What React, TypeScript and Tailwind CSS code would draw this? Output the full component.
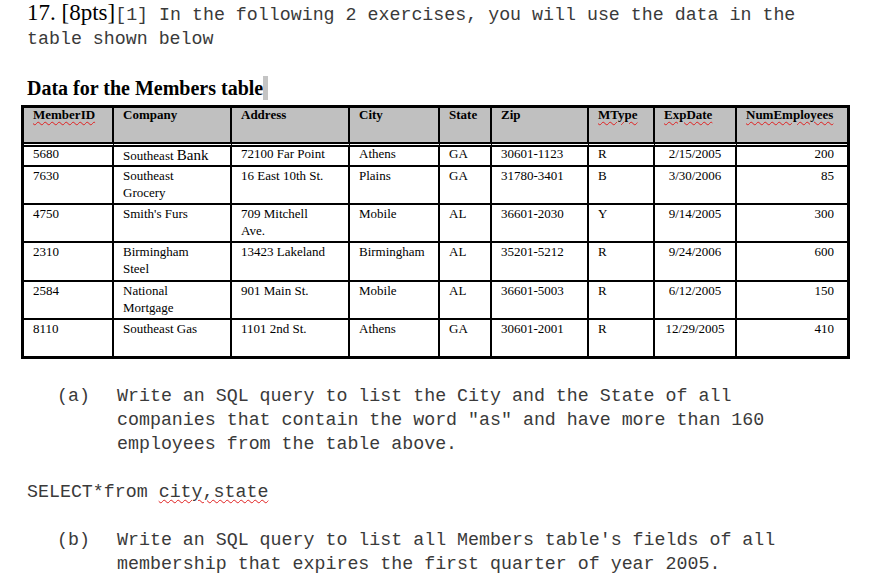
import React from "react";

type TRow = {
  id: string
  company: React.ReactNode
  address: string[]
  city: string
  state: string
  zip: string
  mtype: string
  exp: string
  num: string
  h: string
  lead: string
  companyPad?: string
}

const rows: TRow[] = [
  {
    id: '5680',
    company: <>Southeast <span className="text-[15px]">Bank</span></>,
    address: ['72100 Far Point'], city: 'Athens', state: 'GA', zip: '30601-1123', mtype: 'R', exp: '2/15/2005', num: '200',
    h: 'h-[20px]', lead: 'leading-[13px]', companyPad: 'pt-[2px]'
  },
  {
    id: '7630', company: <>Southeast<br />Grocery</>,
    address: ['16 East 10th St.'], city: 'Plains', state: 'GA', zip: '31780-3401', mtype: 'B', exp: '3/30/2006', num: '85',
    h: 'h-[38px]', lead: 'leading-[17px]'
  },
  {
    id: '4750', company: <>Smith's Furs</>,
    address: ['709 Mitchell', 'Ave.'], city: 'Mobile', state: 'AL', zip: '36601-2030', mtype: 'Y', exp: '9/14/2005', num: '300',
    h: 'h-[38px]', lead: 'leading-[17px]'
  },
  {
    id: '2310', company: <>Birmingham<br />Steel</>,
    address: ['13423 Lakeland'], city: 'Birmingham', state: 'AL', zip: '35201-5212', mtype: 'R', exp: '9/24/2006', num: '600',
    h: 'h-[39px]', lead: 'leading-[17px]'
  },
  {
    id: '2584', company: <>National<br />Mortgage</>,
    address: ['901 Main St.'], city: 'Mobile', state: 'AL', zip: '36601-5003', mtype: 'R', exp: '6/12/2005', num: '150',
    h: 'h-[38px]', lead: 'leading-[17px]'
  },
  {
    id: '8110', company: <>Southeast Gas</>,
    address: ['1101 2nd St.'], city: 'Athens', state: 'GA', zip: '30601-2001', mtype: 'R', exp: '12/29/2005', num: '410',
    h: 'h-[36px]', lead: 'leading-[17px]'
  },
]

const Squiggle: React.FC<{ children: React.ReactNode }> = ({ children }) => (
  <span className="underline decoration-wavy decoration-[#e02020] decoration-1 underline-offset-[2px]">{children}</span>
)

const App: React.FC = () => {
  const th = "bg-[#c0c0c0] bg-clip-padding border-r-2 border-b-[5px] border-black [border-bottom-style:double] align-top text-left font-bold pl-[9px] pr-0 pt-0 leading-[13px]"
  const td = "border-r-2 border-black align-top pl-[9px] pr-0 pt-0"

  return (
    <div className="w-[871px] h-[588px] overflow-hidden bg-white text-black pt-[1px]">
      <div className="pl-[27px] leading-[24px] font-['Liberation_Mono',monospace] text-[18.3px] text-[#3a3a3a] whitespace-nowrap">
        <span className="font-['Liberation_Serif',serif] text-[23px] text-black">17. [8pts]</span>
        [1] In the following 2 exercises, you will use the data in the
        <br />
        table shown below
      </div>

      <div className="pl-[27px] mt-[25px] h-[24px] leading-[24px] font-['Liberation_Serif',serif] text-[20px] font-bold whitespace-nowrap">
        Data for the Members table
        <span className="inline-block align-top w-[5px] h-[24px] bg-[#c4c4c4]" />
      </div>

      <table className="ml-[21px] mt-[5px] w-[829px] table-fixed border-separate border-spacing-0 border-[3px] border-black font-['Liberation_Serif',serif] text-[13px]">
        <colgroup>
          <col className="w-[90px]" />
          <col className="w-[118px]" />
          <col className="w-[118px]" />
          <col className="w-[90px]" />
          <col className="w-[52px]" />
          <col className="w-[97px]" />
          <col className="w-[66px]" />
          <col className="w-[82px]" />
          <col className="w-[110px]" />
        </colgroup>
        <thead>
          <tr className="h-[39px]">
            <th className={th}><Squiggle>MemberID</Squiggle></th>
            <th className={th}>Company</th>
            <th className={th}>Address</th>
            <th className={th}>City</th>
            <th className={th}>State</th>
            <th className={th}>Zip</th>
            <th className={th}><Squiggle>MType</Squiggle></th>
            <th className={th}><Squiggle>ExpDate</Squiggle></th>
            <th className={th + " !border-r-0"}><Squiggle>NumEmployees</Squiggle></th>
          </tr>
        </thead>
        <tbody>
          {rows.map((r, i) => {
            const last = i === rows.length - 1
            const b = last ? "" : " border-b-2"
            return (
              <tr key={r.id} className={r.h}>
                <td className={td + b + " " + r.lead}>{r.id}</td>
                <td className={td + b + " " + r.lead + " " + (r.companyPad ?? "")}>{r.company}</td>
                <td className={td + b + " " + r.lead}>
                  {r.address.map((a, j) => <div key={j}>{a}</div>)}
                </td>
                <td className={td + b + " " + r.lead}>{r.city}</td>
                <td className={td + b + " " + r.lead}>{r.state}</td>
                <td className={td + b + " " + r.lead}>{r.zip}</td>
                <td className={td + b + " " + r.lead}>{r.mtype}</td>
                <td className={td + b + " " + r.lead + " text-center !pl-0"}>{r.exp}</td>
                <td className={td + b + " " + r.lead + " !border-r-0 text-right pr-[13px]"}>{r.num}</td>
              </tr>
            )
          })}
        </tbody>
      </table>

      <div className="mt-[25px] font-['Liberation_Mono',monospace] text-[18.3px] leading-[24px] text-[#3a3a3a] whitespace-nowrap">
        <div className="flex pl-[57px]">
          <span className="w-[60px]">(a)</span>
          <div>
            Write an SQL query to list the City and the State of all<br />
            companies that contain the word "as" and have more than 160<br />
            employees from the table above.
          </div>
        </div>

        <div className="pl-[27px] mt-[24px]">
          SELECT*from <Squiggle>city,state</Squiggle>
        </div>

        <div className="flex pl-[57px] mt-[24px]">
          <span className="w-[60px]">(b)</span>
          <div>
            Write an SQL query to list all Members table's fields of all<br />
            membership that expires the first quarter of year 2005.
          </div>
        </div>
      </div>
    </div>
  )
}

export default App
